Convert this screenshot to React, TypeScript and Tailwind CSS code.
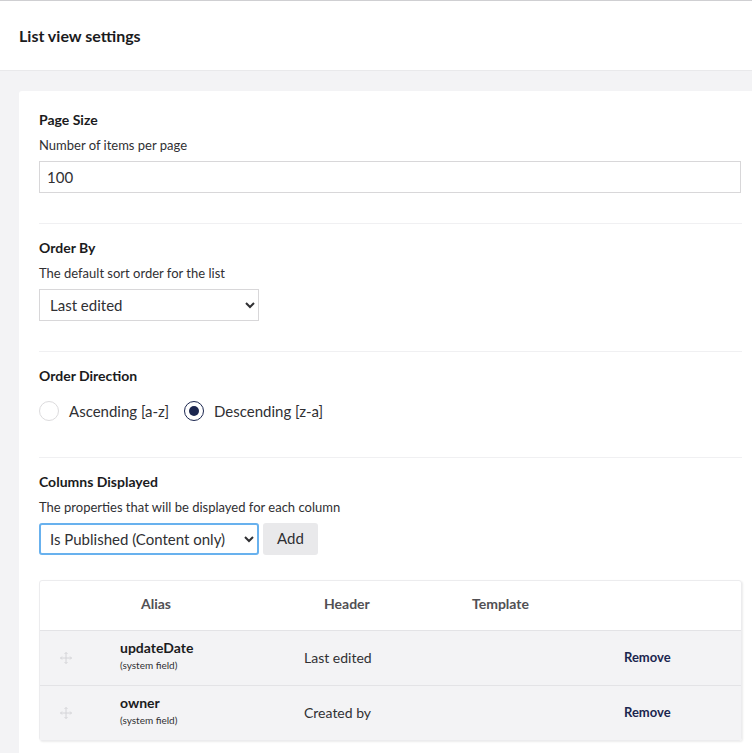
import type { ReactNode } from 'react'

const ROWS = [
  { alias: 'updateDate', header: 'Last edited' },
  { alias: 'owner', header: 'Created by' },
]

function Label({ title, desc }: { title: string; desc?: string }) {
  return (
    <div>
      <div className="text-[14px] font-bold leading-[20px] text-[#1b1b1d]">{title}</div>
      {desc ? <div className="mt-[5px] text-[13px] leading-[20px] text-[#303033]">{desc}</div> : null}
    </div>
  )
}

function Section({ children, first }: { children: ReactNode; first?: boolean }) {
  return (
    <div className={first ? 'pt-[19px] pb-[30px]' : 'border-t border-[#f0f0f2] pt-[14px] pb-[30px]'}>
      {children}
    </div>
  )
}

function DragIcon() {
  return (
    <svg width="12" height="12" viewBox="0 0 12 12" fill="none" stroke="#d4d4d8" strokeWidth="1">
      <path d="M6 0.5v11M0.5 6h11" />
      <path d="M4.5 2L6 0.5 7.5 2M4.5 10L6 11.5 7.5 10M2 4.5L0.5 6 2 7.5M10 4.5L11.5 6 10 7.5" />
    </svg>
  )
}

function Radio({ checked, label }: { checked?: boolean; label: string }) {
  return (
    <label className="flex items-center gap-[10px]">
      <span
        className={
          checked
            ? 'grid h-[20px] w-[20px] place-items-center rounded-full border-[1.5px] border-[#1b264f] bg-white'
            : 'h-[20px] w-[20px] rounded-full border border-[#dcdbdd] bg-white'
        }
      >
        {checked ? <span className="h-[10px] w-[10px] rounded-full bg-[#1b264f]" /> : null}
      </span>
      <span className="text-[15px] text-[#303033]">{label}</span>
    </label>
  )
}

export default function App() {
  return (
    <div className="min-h-[753px] bg-[#f3f3f5] font-['Lato',sans-serif]">
      <header className="flex h-[71px] items-center border-y border-t-[#cfcfd2] border-b-[#e9e9eb] bg-white px-[19px]">
        <h1 className="text-[16px] font-bold text-[#1b1b1d]">List view settings</h1>
      </header>

      <div className="pl-[19px] pt-[20px]">
        <div className="rounded-tl-[3px] bg-white pl-[20px] pr-[10px]">
          <Section first>
            <Label title="Page Size" desc="Number of items per page" />
            <input
              readOnly
              value="100"
              className="mt-[6px] h-[32px] w-[calc(100%-1px)] border border-[#d8d7d9] px-[7px] text-[15px] text-[#303033] outline-none"
            />
          </Section>

          <Section>
            <Label title="Order By" desc="The default sort order for the list" />
            <select
              defaultValue="updateDate"
              className="mt-[6px] h-[32px] w-[220px] border border-[#d8d7d9] bg-white pl-[6px] pr-[6px] text-[15px] text-[#303033] outline-none"
            >
              <option value="updateDate">Last edited</option>
              <option value="name">Name</option>
            </select>
          </Section>

          <Section>
            <Label title="Order Direction" />
            <div className="mt-[14px] flex items-center gap-[15px] pb-[4px]">
              <Radio label="Ascending [a-z]" />
              <Radio checked label="Descending [z-a]" />
            </div>
          </Section>

          <div className="border-t border-[#f0f0f2] pt-[14px] pb-[13px]">
            <Label title="Columns Displayed" desc="The properties that will be displayed for each column" />
            <div className="mt-[6px] flex items-center gap-[4px]">
              <select
                defaultValue="published"
                className="h-[32px] w-[220px] rounded-[3px] border-2 border-[#68b1ee] bg-white pl-[5px] pr-[5px] text-[15px] text-[#303033] outline-none"
              >
                <option value="published">Is Published (Content only)</option>
              </select>
              <button
                type="button"
                className="h-[32px] w-[55px] rounded-[3px] bg-[#e9e9eb] text-[15px] text-[#303033]"
              >
                Add
              </button>
            </div>

            <div className="mt-[25px] rounded-[3px] border border-[#ececee] shadow-[1px_1px_2px_rgba(0,0,0,0.08)]">
              <div className="grid h-[49px] grid-cols-[80px_184px_148px_172px_1fr] items-center pb-[3px] text-[14px] font-bold text-[#515054]">
                <div />
                <div className="pl-[21px]">Alias</div>
                <div className="pl-[20px]">Header</div>
                <div className="pl-[20px]">Template</div>
                <div />
              </div>
              {ROWS.map((row) => (
                <div
                  key={row.alias}
                  className="grid h-[55px] grid-cols-[80px_184px_148px_172px_1fr] items-center border-t border-[#e3e3e6] bg-[#f3f3f5]"
                >
                  <div className="pl-[20px]">
                    <DragIcon />
                  </div>
                  <div className="self-start pt-[7px]">
                    <div className="text-[14px] font-bold leading-[20px] text-[#1b1b1d]">{row.alias}</div>
                    <div className="text-[10px] leading-[14px] text-[#303033]">(system field)</div>
                  </div>
                  <div className="text-[14px] text-[#303033]">{row.header}</div>
                  <div />
                  <div className="text-[13px] font-bold text-[#1b264f]">Remove</div>
                </div>
              ))}
            </div>
          </div>
        </div>
      </div>
    </div>
  )
}
